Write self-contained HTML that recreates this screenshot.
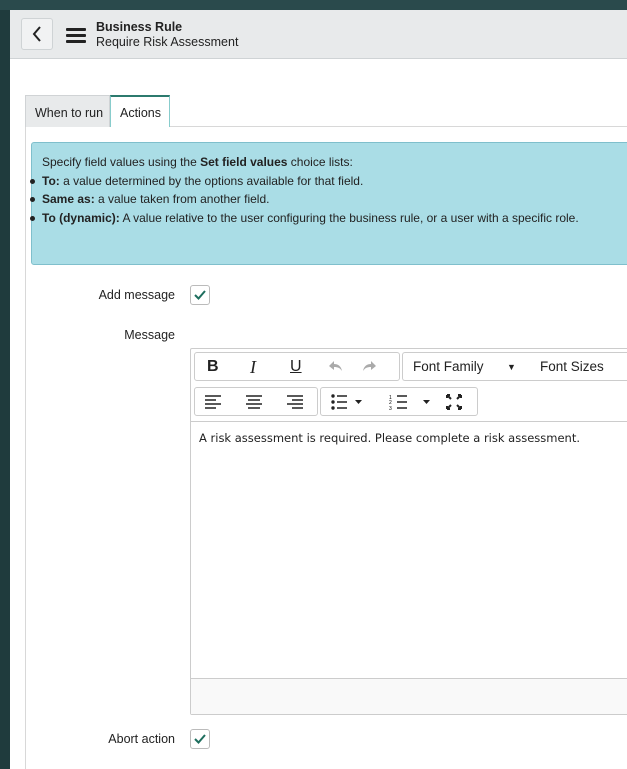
<!DOCTYPE html>
<html><head><meta charset="utf-8"><style>
*{box-sizing:border-box;margin:0;padding:0}
body{width:627px;height:769px;overflow:hidden;background:#1f3b3d;font-family:"Liberation Sans",sans-serif;position:relative}
.top{position:absolute;left:0;top:0;width:627px;height:10px;background:#2a4a4c}
.main{position:absolute;left:10px;top:10px;right:0;bottom:0;background:#fff}
.hdr{position:absolute;left:0;top:0;right:0;height:49px;background:#e8eaeb;border-bottom:1px solid #cfd3d5}
.back{position:absolute;left:11px;top:8px;width:32px;height:32px;border:1px solid #cfd3d5;border-radius:3px;background:#f1f2f3}
.ham{position:absolute;left:56px;top:18px;width:20px}
.ham i{display:block;height:3px;background:#222;border-radius:1px;margin-bottom:3px}
.t1{position:absolute;left:86px;top:10px;font-size:12.5px;font-weight:bold;color:#222}
.t2{position:absolute;left:86px;top:25px;font-size:12.5px;color:#222}
.tabs{position:absolute;left:15px;top:85px;height:32px}
.tab{position:absolute;top:0;height:32px;font-size:12.5px;color:#222;padding-top:10px}
.panel{position:absolute;left:15px;top:116px;right:0;bottom:0;border-left:1px solid #d8d8d8;border-top:1px solid #d8d8d8}
.info{position:absolute;left:21px;top:132px;right:-5px;height:123px;background:#aadde6;border:1px solid #7fbfcc;border-radius:3px;font-size:12px;color:#222;line-height:18.5px;padding:10px 0 0 10px}
.info li{list-style:none;position:relative}
.info li:before{content:"";position:absolute;left:-12px;top:7px;width:5px;height:5px;border-radius:50%;background:#222}
.lbl{position:absolute;font-size:12.5px;color:#222;text-align:right}
.cb{position:absolute;width:20px;height:20px;border:1px solid #bbb;border-radius:3px;background:#fff}
.ed{position:absolute;left:180px;top:338px;right:-5px;height:367px;border:1px solid #ccc;border-radius:2px}
.grp{position:absolute;height:29px;border:1px solid #ccc;border-radius:3px;background:#fff}
.ic{position:absolute;top:0;font-size:16px;color:#222;line-height:28px}
.foot{position:absolute;left:0;right:0;bottom:0;height:36px;background:#f9f9f9;border-top:1px solid #ccc}
</style></head><body>
<div class="top"></div>
<div class="main">
<div class="hdr">
 <div class="back"><svg width="30" height="30" viewBox="0 0 30 30"><path d="M18 8l-6 7 6 7" fill="none" stroke="#222" stroke-width="2"/></svg></div>
 <div class="ham"><i></i><i></i><i></i></div>
 <div class="t1">Business Rule</div>
 <div class="t2">Require Risk Assessment</div>
</div>
<div class="panel"></div>
<div class="tabs">
 <div class="tab" style="left:0;width:85px;background:#e8eaeb;border:1px solid #d0d3d5;border-bottom:none;padding-left:9px">When to run</div>
 <div class="tab" style="left:85px;width:60px;background:#fff;border-top:2px solid #2c7a6e;border-left:1px solid #8cc;border-right:1px solid #8cc;padding-left:9px;padding-top:9px">Actions</div>
</div>
<div class="info">
 <div>Specify field values using the <b>Set field values</b> choice lists:</div>
 <ul><li><b>To:</b> a value determined by the options available for that field.</li>
 <li><b>Same as:</b> a value taken from another field.</li>
 <li><b>To (dynamic):</b> A value relative to the user configuring the business rule, or a user with a specific role.</li></ul>
</div>
<div class="lbl" style="left:60px;width:105px;top:278px">Add message</div>
<div class="cb" style="left:180px;top:275px"><svg width="18" height="18" viewBox="0 0 18 18"><path d="M4 9l3.5 3.5L14 5" fill="none" stroke="#1e6e5e" stroke-width="2"/></svg></div>
<div class="lbl" style="left:60px;width:105px;top:318px">Message</div>
<div class="ed">
 <div class="grp" style="left:3px;top:3px;width:206px">
  <div class="ic" style="left:12px;font-weight:bold">B</div>
  <div class="ic" style="left:55px;font-style:italic;font-family:'Liberation Serif',serif;font-size:18px">I</div>
  <div class="ic" style="left:95px;text-decoration:underline">U</div>
  <svg style="position:absolute;left:134px;top:8px" width="60" height="12"><g fill="#aaa"><path d="M0 5l5-5v3c4 0 7 2 8 7-2-3-4-4-8-4v3z"/><path d="M59 5l-5-5v3c-4 0-7 2-8 7 2-3 4-4 8-4v3z" transform="translate(-12 0)"/></g></svg>
 </div>
 <div class="grp" style="left:211px;top:3px;width:240px;border-right:none">
  <div class="ic" style="left:10px;font-size:13.5px">Font Family</div>
  <div class="ic" style="left:104px;font-size:9px">&#9660;</div>
  <div class="ic" style="left:137px;font-size:13.5px">Font Sizes</div>
 </div>
 <div class="grp" style="left:3px;top:38px;width:124px">
  <svg style="position:absolute;left:10px;top:7px" width="110" height="14"><g stroke="#222" stroke-width="1.5"><path d="M0 1h16M0 5h11M0 9h16M0 13h11"/><path d="M41 1h16M43 5h12M41 9h16M43 13h12"/><path d="M82 1h16M87 5h11M82 9h16M87 13h11"/></g></svg>
 </div>
 <div class="grp" style="left:129px;top:38px;width:158px">
  <svg style="position:absolute;left:10px;top:6px" width="140" height="16"><g fill="#222"><circle cx="2" cy="2" r="1.7"/><circle cx="2" cy="8" r="1.7"/><circle cx="2" cy="14" r="1.7"/><path d="M24 6h7l-3.5 4z"/><path d="M92 6h7l-3.5 4z"/></g><g stroke="#222" stroke-width="1.5"><path d="M6 2h10M6 8h10M6 14h10M66 2h10M66 8h10M66 14h10"/></g><text x="58" y="5" font-size="5" font-family="Liberation Sans">1</text><text x="58" y="10" font-size="5" font-family="Liberation Sans">2</text><text x="58" y="16" font-size="5" font-family="Liberation Sans">3</text><g stroke="#222" stroke-width="2" fill="none"><path d="M116 1l4 4M116 1h3M116 1v3M130 1l-4 4M130 1h-3M130 1v3M116 15l4-4M116 15h3M116 15v-3M130 15l-4-4M130 15h-3M130 15v-3"/></g></svg>
 </div>
 <div style="position:absolute;left:0;right:0;top:72px;border-top:1px solid #ccc"></div>
 <div style="position:absolute;left:8px;top:82px;font-family:'DejaVu Sans',sans-serif;font-size:11.5px;color:#222">A risk assessment is required. Please complete a risk assessment.</div>
 <div class="foot"></div>
</div>
<div class="lbl" style="left:60px;width:105px;top:722px">Abort action</div>
<div class="cb" style="left:180px;top:719px"><svg width="18" height="18" viewBox="0 0 18 18"><path d="M4 9l3.5 3.5L14 5" fill="none" stroke="#1e6e5e" stroke-width="2"/></svg></div>
</div>
</body></html>
